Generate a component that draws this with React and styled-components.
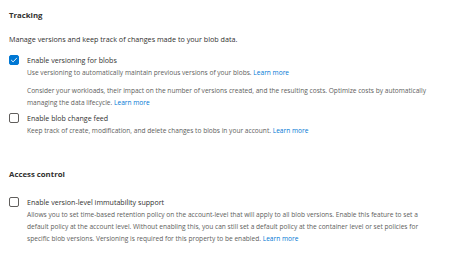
import React from "react";
import styled, { createGlobalStyle } from "styled-components";

const Global = createGlobalStyle`
  html, body { margin: 0; padding: 0; background: #fff; }
  body { font-family: "Open Sans", "Noto Sans", "Liberation Sans", sans-serif; color: #323130; }
`;

const Page = styled.div`
  width: 474px;
  height: 253px;
  box-sizing: border-box;
  padding: 9px 9px 0 9px;
  overflow: hidden;
`;

const Section = styled.section`
  margin-bottom: ${(p) => p.$gap || 0}px;
`;

const Title = styled.h2`
  margin: 0;
  font-size: 7.8px;
  font-weight: 700;
  line-height: 12px;
  color: #323130;
`;

const Intro = styled.p`
  margin: 12px 0 0 0;
  font-size: 7.2px;
  line-height: 12px;
  color: #323130;
`;

const Option = styled.div`
  display: flex;
  align-items: flex-start;
  gap: 8px;
  margin-top: ${(p) => p.$top}px;
`;

const Box = styled.span`
  flex: none;
  width: 10px;
  height: 10px;
  box-sizing: border-box;
  border-radius: 2px;
  border: 1px solid ${(p) => (p.$checked ? "#0078d4" : "#605e5c")};
  background: ${(p) => (p.$checked ? "#0078d4" : "#fff")};
  display: flex;
  align-items: center;
  justify-content: center;
  margin-top: 1px;
`;

const Body = styled.div`
  display: flex;
  flex-direction: column;
`;

const Label = styled.div`
  font-size: 7.1px;
  line-height: 12px;
  color: #323130;
`;

const Desc = styled.p`
  margin: ${(p) => p.$top || 1}px 0 0 0;
  font-size: 6.6px;
  line-height: 12px;
  color: #605e5c;
  max-width: 400px;
`;

const Link = styled.a`
  color: #0078d4;
  text-decoration: none;
`;

const Check = () => (
  <svg width="8" height="8" viewBox="0 0 8 8">
    <path d="M1.4 4.2 L3.1 5.9 L6.6 2.2" fill="none" stroke="#fff" strokeWidth="0.9" strokeLinecap="round" strokeLinejoin="round" />
  </svg>
);

export default function App() {
  return (
    <>
      <Global />
      <Page>
        <Section $gap={31}>
          <Title>Tracking</Title>
          <Intro>Manage versions and keep track of changes made to your blob data.</Intro>
          <Option $top={9}>
            <Box $checked><Check /></Box>
            <Body>
              <Label>Enable versioning for blobs</Label>
              <Desc>
                Use versioning to automatically maintain previous versions of your blobs. <Link>Learn more</Link>
              </Desc>
              <Desc $top={6}>
                Consider your workloads, their impact on the number of versions created, and the resulting costs. Optimize costs by automatically managing the data lifecycle. <Link>Learn more</Link>
              </Desc>
            </Body>
          </Option>
          <Option $top={3}>
            <Box />
            <Body>
              <Label>Enable blob change feed</Label>
              <Desc>
                Keep track of create, modification, and delete changes to blobs in your account. <Link>Learn more</Link>
              </Desc>
            </Body>
          </Option>
        </Section>
        <Section>
          <Title>Access control</Title>
          <Option $top={16}>
            <Box />
            <Body>
              <Label>Enable version-level immutability support</Label>
              <Desc>
                Allows you to set time-based retention policy on the account-level that will apply to all blob versions. Enable this feature to set a default policy at the account level. Without enabling this, you can still set a default policy at the container level or set policies for specific blob versions. Versioning is required for this property to be enabled. <Link>Learn more</Link>
              </Desc>
            </Body>
          </Option>
        </Section>
      </Page>
    </>
  );
}
